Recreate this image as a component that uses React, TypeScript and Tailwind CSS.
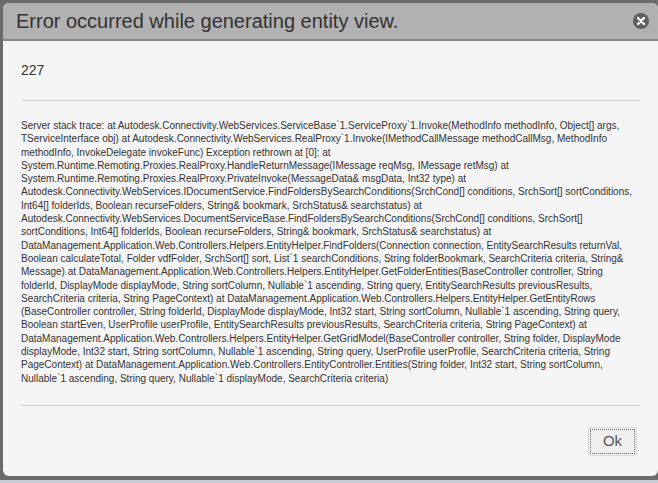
const trace = [
  "Server stack trace: at Autodesk.Connectivity.WebServices.ServiceBase`1.ServiceProxy`1.Invoke(MethodInfo methodInfo, Object[] args,",
  "TServiceInterface obj) at Autodesk.Connectivity.WebServices.RealProxy`1.Invoke(IMethodCallMessage methodCallMsg, MethodInfo",
  "methodInfo, InvokeDelegate invokeFunc) Exception rethrown at [0]: at",
  "System.Runtime.Remoting.Proxies.RealProxy.HandleReturnMessage(IMessage reqMsg, IMessage retMsg) at",
  "System.Runtime.Remoting.Proxies.RealProxy.PrivateInvoke(MessageData& msgData, Int32 type) at",
  "Autodesk.Connectivity.WebServices.IDocumentService.FindFoldersBySearchConditions(SrchCond[] conditions, SrchSort[] sortConditions,",
  "Int64[] folderIds, Boolean recurseFolders, String& bookmark, SrchStatus& searchstatus) at",
  "Autodesk.Connectivity.WebServices.DocumentServiceBase.FindFoldersBySearchConditions(SrchCond[] conditions, SrchSort[]",
  "sortConditions, Int64[] folderIds, Boolean recurseFolders, String& bookmark, SrchStatus& searchstatus) at",
  "DataManagement.Application.Web.Controllers.Helpers.EntityHelper.FindFolders(Connection connection, EntitySearchResults returnVal,",
  "Boolean calculateTotal, Folder vdfFolder, SrchSort[] sort, List`1 searchConditions, String folderBookmark, SearchCriteria criteria, String&",
  "Message) at DataManagement.Application.Web.Controllers.Helpers.EntityHelper.GetFolderEntities(BaseController controller, String",
  "folderId, DisplayMode displayMode, String sortColumn, Nullable`1 ascending, String query, EntitySearchResults previousResults,",
  "SearchCriteria criteria, String PageContext) at DataManagement.Application.Web.Controllers.Helpers.EntityHelper.GetEntityRows",
  "(BaseController controller, String folderId, DisplayMode displayMode, Int32 start, String sortColumn, Nullable`1 ascending, String query,",
  "Boolean startEven, UserProfile userProfile, EntitySearchResults previousResults, SearchCriteria criteria, String PageContext) at",
  "DataManagement.Application.Web.Controllers.Helpers.EntityHelper.GetGridModel(BaseController controller, String folder, DisplayMode",
  "displayMode, Int32 start, String sortColumn, Nullable`1 ascending, String query, UserProfile userProfile, SearchCriteria criteria, String",
  "PageContext) at DataManagement.Application.Web.Controllers.EntityController.Entities(String folder, Int32 start, String sortColumn,",
  "Nullable`1 ascending, String query, Nullable`1 displayMode, SearchCriteria criteria)",
];

export default function App() {
  return (
    <div className="flex h-[483px] w-[658px] flex-col overflow-hidden bg-[#6b6b6b] font-['Liberation_Sans',Arial,sans-serif]">
      <div className="flex-1 pt-[3px] pl-[3px]">
        <div className="flex h-[473px] w-[655px] flex-col overflow-hidden rounded-[6px] bg-[#f5f5f5]">
          <div className="flex h-[38px] shrink-0 items-center justify-between border-b-2 border-[#858585] bg-[#b1b1b1] pr-[9px] pl-[13px]">
            <h1 className="text-[20px] leading-none text-[#333333]">
              Error occurred while generating entity view.
            </h1>
            <button className="flex h-[16px] w-[16px] items-center justify-center rounded-full bg-[#5f5f5f]">
              <svg width="10" height="10" viewBox="0 0 10 10">
                <path
                  d="M2 2l6 6M8 2l-6 6"
                  stroke="#ffffff"
                  strokeWidth="2.4"
                  strokeLinecap="round"
                />
              </svg>
            </button>
          </div>
          <div className="flex flex-1 flex-col px-[18px]">
            <p className="mt-[21px] text-[14px] leading-[16px] text-[#333333]">227</p>
            <div className="mt-[22px] h-[1px] bg-[#cfcfcf]" />
            <div className="mt-[18px] h-[286px] text-[10px] leading-[13.3px] whitespace-nowrap text-[#333333]">
              {trace.map((line) => (
                <div key={line}>{line}</div>
              ))}
            </div>
            <div className="h-[1px] bg-[#cfcfcf]" />
            <div className="flex justify-end pt-[21px] pr-[3px]">
              <button className="h-[29px] w-[49px] rounded-[3px] border border-[#d8d8d8] bg-[#efefef] p-[1px] text-[15px] text-[#555555]">
                <span className="flex h-full w-full items-center justify-center border border-dotted border-[#666666]">
                  Ok
                </span>
              </button>
            </div>
          </div>
        </div>
      </div>
      <div className="h-[3px] shrink-0 bg-[#c9ccd3]" />
    </div>
  );
}
